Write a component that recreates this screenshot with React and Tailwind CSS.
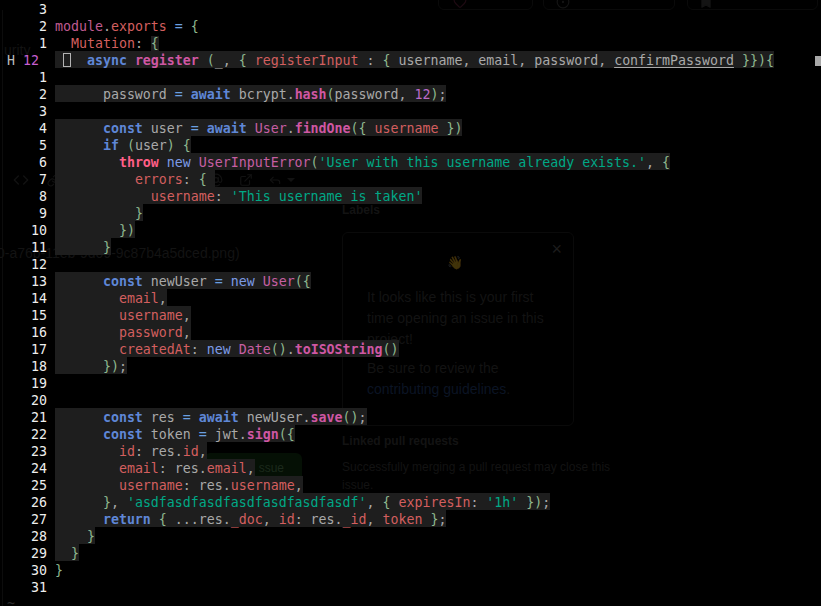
import { Code, Link, AtSign, ExternalLink, Reply, Heart, CircleDot, Bookmark } from "lucide-react";

const K = "text-[#5f87d7] font-bold";
const P = "text-[#cf57a3] font-bold";
const U = "text-[#c65fa3]";
const R = "text-[#d35f5f]";
const G = "text-[#8fb98f]";
const S = "text-[#00a886]";
const T = "text-[#a9a9a9]";
const O = "text-[#6a9fe0]";
const N = "text-[#7b9ae6]";
const M = "text-[#bb6bc9]";

const t = (text, cls = T) => ({ text, cls });

const rows = [
  { n: "3" },
  { n: "2", plain: true, code: [t("module", "text-[#c05b92]"), t(".", T), t("exports", R), t(" = ", O), t("{", G)] },
  { n: "1", plain: true, code: [t("  Mutation", R), t(": ", T)], brace: "{" },
  { n: "12", cur: true, code: [t("    "), t("async ", K), t("register ", P), t("(", G), t("_, ", T), t("{ ", G), t("registerInput ", R), t(": ", T), t("{ ", G), t("username, email, password, ", T), t("confirmPassword", "text-[#a9a9a9] underline underline-offset-2"), t(" ", T), t("}})", G), t("{", G)] },
  { n: "1" },
  { n: "2", code: [t("      password "), t("= ", O), t("await ", K), t("bcrypt."), t("hash", P), t("(", G), t("password, "), t("12", M), t(")", G), t(";")] },
  { n: "3" },
  { n: "4", code: [t("      "), t("const ", K), t("user "), t("= ", O), t("await ", K), t("User", U), t("."), t("findOne", P), t("({ ", G), t("username ", R), t("})", G)] },
  { n: "5", code: [t("      "), t("if ", K), t("(", G), t("user"), t(") {", G)] },
  { n: "6", code: [t("        "), t("throw ", "text-[#ff5f87] font-bold"), t("new ", N), t("UserInputError", U), t("(", G), t("'User with this username already exists.'", S), t(", "), t("{", G)] },
  { n: "7", code: [t("          "), t("errors", R), t(": "), t("{ ", G)] },
  { n: "8", code: [t("            "), t("username", R), t(": "), t("'This username is taken'", S)] },
  { n: "9", code: [t("          "), t("}", G)] },
  { n: "10", code: [t("        "), t("})", G)] },
  { n: "11", code: [t("      "), t("}", G)] },
  { n: "12" },
  { n: "13", code: [t("      "), t("const ", K), t("newUser "), t("= ", O), t("new ", N), t("User", U), t("({", G)] },
  { n: "14", code: [t("        "), t("email", R), t(",")] },
  { n: "15", code: [t("        "), t("username", R), t(",")] },
  { n: "16", code: [t("        "), t("password", R), t(",")] },
  { n: "17", code: [t("        "), t("createdAt", R), t(": "), t("new ", N), t("Date", U), t("()", G), t("."), t("toISOString", P), t("()", G)] },
  { n: "18", code: [t("      "), t("})", G), t(";")] },
  { n: "19" },
  { n: "20" },
  { n: "21", code: [t("      "), t("const ", K), t("res "), t("= ", O), t("await ", K), t("newUser."), t("save", P), t("()", G), t(";")] },
  { n: "22", code: [t("      "), t("const ", K), t("token "), t("= ", O), t("jwt."), t("sign", P), t("({", G)] },
  { n: "23", code: [t("        "), t("id", R), t(": res."), t("id", R), t(",")] },
  { n: "24", code: [t("        "), t("email", R), t(": res."), t("email", R), t(",")] },
  { n: "25", code: [t("        "), t("username", R), t(": res."), t("username", R), t(",")] },
  { n: "26", code: [t("      "), t("}", G), t(", "), t("'asdfasdfasdfasdfasdfasdfasdf'", S), t(", "), t("{ ", G), t("expiresIn", R), t(": "), t("'1h'", S), t(" "), t("})", G), t(";")] },
  { n: "27", code: [t("      "), t("return ", K), t("{ ", G), t("...res."), t("_doc", R), t(", "), t("id", R), t(": res."), t("_id", R), t(", "), t("token ", R), t("}", G), t(";")] },
  { n: "28", code: [t("    "), t("}", G)] },
  { n: "29", code: [t("  "), t("}", G)] },
  { n: "30", plain: true, code: [t("}", G)] },
  { n: "31" },
];

function Row({ row }) {
  return (
    <div className="flex h-[17px] leading-[15px]">
      <div className="flex w-[55px] shrink-0 justify-end pt-[2px] pr-2 text-[#eeeeee]">
        {row.cur && <span className="mr-2 text-[#bdbdbd]">H</span>}
        {row.cur ? <span className="mr-2 text-[#c75fd1]">{row.n}</span> : <span>{row.n}</span>}
      </div>
      {row.code && (
        <div className={row.plain ? "relative whitespace-pre pt-[2px]" : "relative whitespace-pre bg-[#1e1e1e] pt-[2px]"}>
          {row.code.map((s, i) => (
            <span key={i} className={s.cls}>{s.text}</span>
          ))}
          {row.brace && <span className="bg-[#1e1e1e] text-[#8fb98f]">{row.brace}</span>}
          {row.cur && <span className="absolute left-2 top-[2px] h-[14px] w-2 border border-[#b4b4b4]" />}
        </div>
      )}
    </div>
  );
}

/* The page seen faintly through the transparent terminal. */
function Ghost() {
  return (
    <div className="absolute inset-0 flex flex-col overflow-hidden font-['Liberation_Sans',sans-serif] text-[#131313]">
      <div className="flex h-[10px] items-end pl-[438px]">
        <div className="flex h-[16px] w-[95px] shrink-0 items-center rounded-md border border-[#0a0a0a] pl-[14px]">
          <Heart size={14} className="text-[#1e0a12]" />
        </div>
        <div className="ml-[10px] flex h-[16px] w-[132px] shrink-0 items-center rounded-md border border-[#0a0a0a] pl-[12px]">
          <CircleDot size={14} className="text-[#141414]" />
        </div>
        <div className="ml-[12px] flex h-[16px] w-[131px] shrink-0 items-center rounded-md border border-[#0a0a0a] pl-[11px]">
          <Bookmark size={14} className="fill-[#141414] text-[#141414]" />
        </div>
      </div>
      <div className="flex flex-1">
        <div className="ml-[2px] flex w-[340px] shrink-0 flex-col border-l border-[#0c0c0c]">
          <div className="mt-[32px] pl-px text-[14px] leading-[16px]">urity</div>
          <div className="mt-[115px] flex h-[14px] items-center text-[#121212]">
            <Code size={16} className="ml-[10px]" />
            <Link size={13} className="ml-[18px]" />
            <AtSign size={14} className="ml-[149px]" />
            <ExternalLink size={14} className="ml-[16px]" />
            <Reply size={14} className="ml-[15px]" />
            <span className="ml-[5px] h-0 w-0 border-x-[4px] border-t-[4px] border-x-transparent border-t-[#121212]" />
          </div>
          <div className="ml-[-6px] mt-[58px] whitespace-nowrap text-[14px] leading-[16px]">0-a76b-11eb-9d09-9c87b4a5dced.png)</div>
          <div className="ml-[201px] mt-[192px] flex h-[42px] w-[98px] justify-end rounded-md bg-[#051005] pr-[18px] pt-[7px] text-[12px] leading-[16px] text-[#1c2a1c]">ssue</div>
        </div>
        <div className="flex w-[270px] shrink-0 flex-col">
          <div className="mt-[192px] text-[12px] font-bold leading-[16px]">Labels</div>
          <div className="mt-[14px] flex h-[194px] w-[232px] flex-col rounded-md border border-[#0a0a0a] pt-[7px] text-[14px] leading-[21px]">
            <div className="flex justify-end pr-[11px] text-[18px] leading-[18px] text-[#1c1c1c]">×</div>
            <div className="pl-[104px] text-[13px] leading-[10px] opacity-25">👋</div>
            <div className="mt-[19px] px-[24px]">
              <p>It looks like this is your first time opening an issue in this project!</p>
              <p className="mt-2">Be sure to review the <span className="text-[#0b1424]">contributing guidelines</span>.</p>
            </div>
          </div>
          <div className="mt-[7px] text-[12px] font-bold leading-[16px]">Linked pull requests</div>
          <div className="mt-[9px] text-[12px] leading-[18px]">Successfully merging a pull request may close this issue.</div>
        </div>
      </div>
    </div>
  );
}

export default function App() {
  return (
    <div className="relative h-[606px] w-[821px] overflow-hidden bg-black font-['DejaVu_Sans_Mono',monospace] text-[13.28px]">
      <Ghost />
      <div className="relative">
        {rows.map((row, i) => (
          <Row key={i} row={row} />
        ))}
        <div className="h-[17px] pl-[7px] leading-[17px] text-[#2a2a2a]">~</div>
      </div>
      <div className="absolute left-[815px] top-[56px] h-[10px] w-[6px] bg-[#a8a8a8]" />
    </div>
  );
}
